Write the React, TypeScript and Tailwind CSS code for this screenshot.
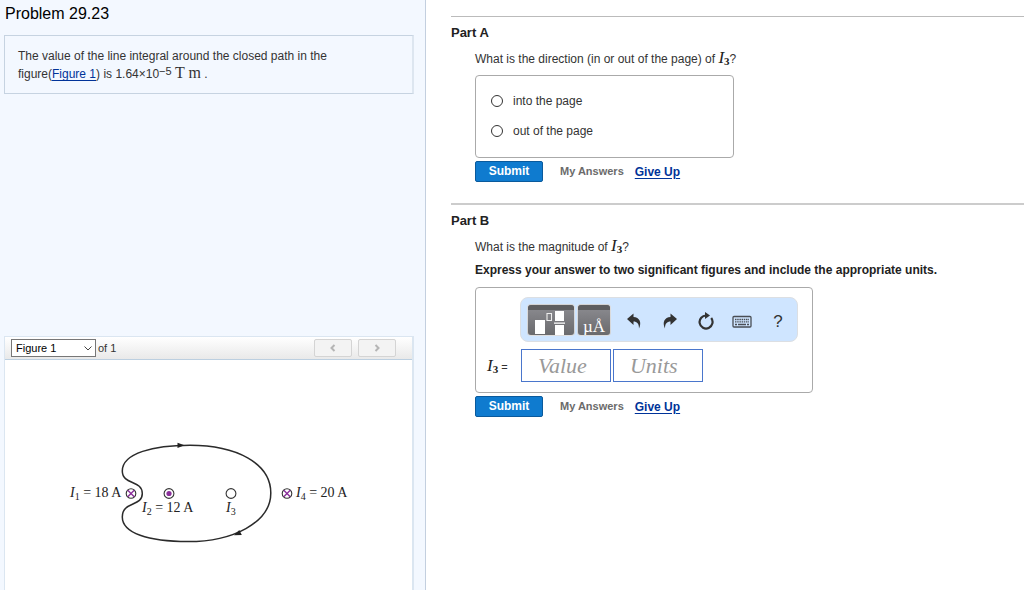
import type { ReactNode } from 'react';

function Var({ sub }: { sub: string }) {
  return (
    <span className="font-['Liberation_Serif',serif] text-[17px] leading-none text-[#222]">
      <i>I</i>
      <sub className="bottom-0 align-[-2px] text-[11px] leading-none font-bold">{sub}</sub>
    </span>
  );
}

function ProblemPanel() {
  return (
    <section className="border border-r-2 border-[#c6d3e1] border-r-[#dde6f0] px-[13px] pt-3 pb-[11px] text-xs leading-[17px] text-[#333]">
      <p className="h-[34px] max-w-[330px]">
        The value of the line integral around the closed path in the figure(
        <a href="#figure-1" className="text-[#003399] underline underline-offset-2">
          Figure 1
        </a>
        ) is 1.64×10
        <sup className="top-0 align-[3px] text-[11px] leading-none">−5</sup>{' '}
        <span className="font-['Liberation_Serif',serif] text-base leading-none">T m</span> .
      </p>
    </section>
  );
}

function NavButton({ label, d }: { label: string; d: string }) {
  return (
    <button
      type="button"
      aria-label={label}
      className="flex h-[18px] w-[38px] items-center justify-center rounded-xs border border-[#d4d4d4] bg-[#f3f3f3]"
    >
      <svg viewBox="0 0 8 8" className="size-2" fill="none" stroke="#b5b5b5" strokeWidth="2">
        <path d={d} />
      </svg>
    </button>
  );
}

function Into({ x, y }: { x: number; y: number }) {
  return (
    <g>
      <circle cx={x} cy={y} r="4.8" fill="#fff" stroke="#333" strokeWidth="1.1" />
      <path
        d={`M${x - 3.2} ${y - 3.2}L${x + 3.2} ${y + 3.2}M${x + 3.2} ${y - 3.2}L${x - 3.2} ${y + 3.2}`}
        stroke="#8a2f9b"
        strokeWidth="1.4"
      />
    </g>
  );
}

function DiagramLabel({ x, y, sub, children }: { x: number; y: number; sub: string; children?: ReactNode }) {
  return (
    <text x={x} y={y} fill="#222" className="font-['Liberation_Serif',serif] text-[14px]">
      <tspan fontStyle="italic">I</tspan>
      <tspan dy="3" className="text-[10px]">
        {sub}
      </tspan>
      <tspan dy="-3">{children}</tspan>
    </text>
  );
}

function CurrentDiagram() {
  return (
    <svg viewBox="0 0 300 120" className="h-[120px] w-[300px]" fill="none" role="img" aria-label="Closed path around currents">
      <path
        d="M62.3 41C62.3 23 94 15.3 130 15.3C176 15.3 210.8 33 210.8 63C210.8 93 172 111.6 128 111.6C88 111.6 62.3 103 62.3 87C62.3 71 82.3 77 82.3 63.5C82.3 50 62.3 55 62.3 41Z"
        stroke="#2b2b2b"
        strokeWidth="1.5"
      />
      <path d="M117.5 12.7L124.5 15.3L117.5 18Z" fill="#222" />
      <path d="M174 105.300L179.300 100L181.800 105Z" fill="#222" />
      <Into x={71} y={63.5} />
      <circle cx="109" cy="63.5" r="4.9" stroke="#333" strokeWidth="1.1" />
      <circle cx="109" cy="63.5" r="2.6" fill="#8a2f9b" />
      <circle cx="171" cy="63.5" r="4.9" stroke="#333" strokeWidth="1.1" />
      <Into x={227} y={63.5} />
      <DiagramLabel x={10} y={67} sub="1">{' = 18 A'}</DiagramLabel>
      <DiagramLabel x={82} y={82} sub="2">{' = 12 A'}</DiagramLabel>
      <DiagramLabel x={166} y={82} sub="3" />
      <DiagramLabel x={236} y={67} sub="4">{' = 20 A'}</DiagramLabel>
    </svg>
  );
}

function FigurePanel() {
  return (
    <section id="figure-1" className="mt-auto border border-r-2 border-b-0 border-[#dbe6f1] bg-white">
      <header className="flex h-[23px] items-center border-b border-[#bccfe0] bg-gradient-to-b from-white to-[#e9e9e9] pr-4 pl-1.5 text-[11px] text-[#333]">
        <div className="relative">
          <select
            aria-label="Figure"
            className="block h-[18px] w-[85px] appearance-none border border-[#777] bg-white pl-1 text-[11px] leading-4 text-black"
          >
            <option>Figure 1</option>
          </select>
          <svg
            viewBox="0 0 8 5"
            className="pointer-events-none absolute top-[7px] right-1 h-[5px] w-2"
            fill="none"
            stroke="#444"
          >
            <path d="M.5 .5L4 4L7.5 .5" />
          </svg>
        </div>
        <span className="ml-0.5">of 1</span>
        <nav className="ml-auto flex gap-1.5">
          <NavButton label="Previous figure" d="M5.5 1L2.5 4L5.5 7" />
          <NavButton label="Next figure" d="M2.5 1L5.5 4L2.5 7" />
        </nav>
      </header>
      <div className="h-[230px] pt-[70px] pl-[55px]">
        <CurrentDiagram />
      </div>
    </section>
  );
}

function Actions() {
  return (
    <div className="mt-[3px] flex h-[21px] items-center font-bold">
      <button
        type="button"
        className="h-[21px] w-[68px] rounded-xs border border-[#0a5a9c] bg-[#0f7bcf] pb-0.5 text-xs leading-none text-white"
      >
        Submit
      </button>
      <span className="ml-[17px] text-[11px] text-[#6b6b6b]">My Answers</span>
      <a href="#give-up" className="ml-[11px] text-xs text-[#003399] underline underline-offset-2">
        Give Up
      </a>
    </div>
  );
}

function Choice({ label }: { label: string }) {
  return (
    <label className="flex h-[30px] items-center gap-[10px]">
      <input
        type="radio"
        name="direction"
        className="size-3 appearance-none rounded-full border border-[#333] bg-white checked:border-4"
      />
      {label}
    </label>
  );
}

function IconButton({ label, children }: { label: string; children: ReactNode }) {
  return (
    <button type="button" aria-label={label} className="flex h-8 w-5 items-center justify-center text-[#333]">
      {children}
    </button>
  );
}

const tileClass =
  'overflow-hidden rounded-sm border border-white/70 bg-gradient-to-b from-[#8d8d92] to-[#6a6a6d]';

function Toolbar() {
  return (
    <div className="flex h-[45px] w-[278px] items-center rounded-lg border border-[#dcdfe3] bg-[#cfe5ff] pl-1.5">
      <button type="button" aria-label="Templates" className={`${tileClass} h-8 w-12`}>
        <svg viewBox="0 0 46 30" className="block h-[30px] w-[46px]">
          <path d="M0 0H46V5H0Z" fill="#5d5d60" />
          <path d="M7 15H17V29H7ZM27 6H36V16H27ZM27 20H36V30H27ZM26 17.5H37V18.8H26Z" fill="#fff" />
          <path d="M19 8.5H23.5V15.5H19Z" fill="none" stroke="#eee" strokeWidth="1.1" />
        </svg>
      </button>
      <button type="button" aria-label="Units" className={`${tileClass} ml-0.5 h-8 w-[34px]`}>
        <span className="block h-[30px] border-t-[5px] border-[#5d5d60] pt-2 font-['Liberation_Serif',serif] text-[17px] leading-none text-white">
          µÅ
        </span>
      </button>
      <div className="ml-[13px] flex gap-4 pt-[3px]">
        <IconButton label="Undo">
          <svg viewBox="0 0 16 16" className="size-4" fill="currentColor">
            <path d="M1 6L7.5 .5V4C13.5 4.5 16 9 13 15.5C13 10.5 11 8.5 7.5 8.5V12Z" />
          </svg>
        </IconButton>
        <IconButton label="Redo">
          <svg viewBox="0 0 16 16" className="size-4" fill="currentColor">
            <path d="M15 6L8.5 .5V4C2.5 4.5 0 9 3 15.5C3 10.5 5 8.5 8.5 8.5V12Z" />
          </svg>
        </IconButton>
        <IconButton label="Reset">
          <svg viewBox="0 0 18 18" className="size-[18px]" fill="none">
            <path d="M9.5 3.5A6.5 6.5 0 1 0 14.2 6" stroke="currentColor" strokeWidth="2.2" />
            <path d="M8 0L13 3.5L8 7Z" fill="currentColor" />
          </svg>
        </IconButton>
        <IconButton label="Keyboard shortcuts">
          <svg viewBox="0 0 20 14" className="h-[14px] w-5 shrink-0" fill="none" stroke="#4a4e55">
            <rect x="1" y="2.5" width="18" height="10.5" rx="1" strokeWidth="1.3" />
            <path d="M3 5.5H17M3 7.8H17" strokeWidth="1.3" strokeDasharray="1.5 .7" />
            <path d="M3 10.5H5M6 10.5H14M15 10.5H17" strokeWidth="1.4" />
          </svg>
        </IconButton>
        <IconButton label="Help">
          <span className="text-[17px] leading-none">?</span>
        </IconButton>
      </div>
    </div>
  );
}

const fieldClass =
  "h-[33px] w-[90px] border border-[#4a76cc] bg-white pl-4 font-['Liberation_Serif',serif] text-[22px] italic leading-none outline-none placeholder:text-[#999]";

export default function App() {
  return (
    <div className="flex min-h-screen bg-white font-['Liberation_Sans',Arial,sans-serif]">
      <aside className="flex w-[41.6%] shrink-0 flex-col border-r border-[#c3cfdf] bg-[#f3f8ff] pr-[11px] pl-1">
        <h1 className="mt-1 mb-3 pl-px text-base leading-[19px] text-black">Problem 29.23</h1>
        <ProblemPanel />
        <FigurePanel />
      </aside>

      <main className="min-w-0 flex-1 pt-4 pl-[25px] text-xs text-[#333]">
        <section className="border-t border-[#bbb] pt-2">
          <h2 className="text-[13px] leading-4 font-bold text-[#222]">Part A</h2>
          <div className="pl-6">
            <p className="mt-2 h-4 leading-4">
              What is the direction (in or out of the page) of <Var sub="3" />?
            </p>
            <fieldset className="mt-[10px] h-[83px] w-[259px] rounded-sm border border-[#aaa] pt-2.5 pl-[15px]">
              <Choice label="into the page" />
              <Choice label="out of the page" />
            </fieldset>
            <Actions />
          </div>
        </section>

        <section className="mt-[21px] border-t-2 border-[#ccc] pt-2">
          <h2 className="text-[13px] leading-4 font-bold text-[#222]">Part B</h2>
          <div className="pl-6">
            <p className="mt-2 h-4 leading-4">
              What is the magnitude of <Var sub="3" />?
            </p>
            <p className="mt-[9px] leading-4 font-bold text-[#222]">
              Express your answer to two significant figures and include the appropriate units.
            </p>
            <div className="mt-[9px] h-[106px] w-[338px] rounded-sm border border-[#aaa] pt-[9px] pl-[11px]">
              <div className="pl-[33px]">
                <Toolbar />
              </div>
              <div className="mt-[7px] flex items-center">
                <label htmlFor="value" className="w-[34px] shrink-0 text-[11px]">
                  <Var sub="3" /> =
                </label>
                <input id="value" placeholder="Value" className={fieldClass} />
                <input aria-label="Units" placeholder="Units" className={`${fieldClass} ml-0.5`} />
              </div>
            </div>
            <Actions />
          </div>
        </section>
      </main>
    </div>
  );
}
